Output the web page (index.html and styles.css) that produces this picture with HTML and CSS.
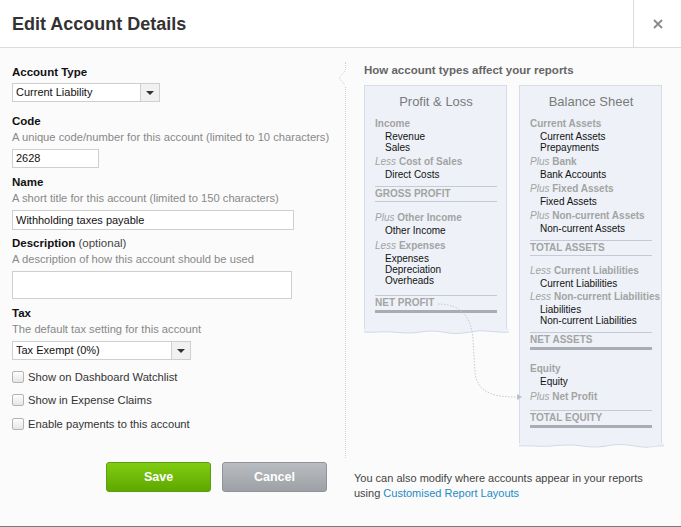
FILE: index.html
```html
<!DOCTYPE html>
<html>
<head>
<meta charset="utf-8">
<link rel="stylesheet" href="styles.css">
</head>
<body>
<div class="dialog">
  <header class="hdr">
    <h1 class="title">Edit Account Details</h1>
    <div class="close">
      <svg width="10" height="10" viewBox="0 0 10 10"><path d="M1 1L9 9M9 1L1 9" stroke="#8a8a8a" stroke-width="1.8"/></svg>
    </div>
  </header>

  <div class="main">
    <div class="form">
      <div class="lbl">Account Type</div>
      <div class="select sel-type mt3"><span class="val">Current Liability</span><span class="arr"></span></div>

      <div class="lbl mt11">Code</div>
      <div class="help">A unique code/number for this account (limited to 10 characters)</div>
      <div class="input in-code mt4">2628</div>

      <div class="lbl mt6">Name</div>
      <div class="help">A short title for this account (limited to 150 characters)</div>
      <div class="input in-name mt4">Withholding taxes payable</div>

      <div class="lbl mt5">Description <span class="opt">(optional)</span></div>
      <div class="help">A description of how this account should be used</div>
      <div class="input in-desc mt4"></div>

      <div class="lbl mt6">Tax</div>
      <div class="help">The default tax setting for this account</div>
      <div class="select sel-tax mt4"><span class="val">Tax Exempt (0%)</span><span class="arr"></span></div>

      <label class="chk mt9"><span class="box"></span>Show on Dashboard Watchlist</label>
      <label class="chk mt7"><span class="box"></span>Show in Expense Claims</label>
      <label class="chk mt8"><span class="box"></span>Enable payments to this account</label>
    </div>

    <div class="info">
      <div class="notch"><svg width="8" height="16" viewBox="0 0 8 16"><path d="M7 0L1 7L7 14" fill="none" stroke="#c9d1dd" stroke-width="1" stroke-dasharray="1 1"/></svg></div>
      <div class="info-h">How account types affect your reports</div>
      <div class="cards">
        <div class="card pl">
          <div class="card-t">Profit &amp; Loss</div>
          <div class="cat mt7">Income</div>
          <div class="it">Revenue</div>
          <div class="it">Sales</div>
          <div class="cat mt2"><i>Less</i> Cost of Sales</div>
          <div class="it">Direct Costs</div>
          <div class="tot mt6">GROSS PROFIT</div>
          <div class="cat mt9"><i>Plus</i> Other Income</div>
          <div class="it">Other Income</div>
          <div class="cat mt3"><i>Less</i> Expenses</div>
          <div class="it">Expenses</div>
          <div class="it">Depreciation</div>
          <div class="it">Overheads</div>
          <div class="tot thick mt9">NET PROFIT</div>
          <svg class="tear" viewBox="0 0 143 6" preserveAspectRatio="none"><path d="M0 0V3C10 4 18 2 28 3S45 5 56 3 74 2 84 4 102 3 112 2 130 4 143 3V0Z" fill="#eef2f8"/><path d="M0 3C10 4 18 2 28 3S45 5 56 3 74 2 84 4 102 3 112 2 130 4 143 3" fill="none" stroke="#d3dae5" stroke-width="1"/></svg>
        </div>
        <div class="card bs">
          <div class="card-t">Balance Sheet</div>
          <div class="cat mt7">Current Assets</div>
          <div class="it">Current Assets</div>
          <div class="it">Prepayments</div>
          <div class="cat mt2"><i>Plus</i> Bank</div>
          <div class="it">Bank Accounts</div>
          <div class="cat mt2"><i>Plus</i> Fixed Assets</div>
          <div class="it">Fixed Assets</div>
          <div class="cat mt2"><i>Plus</i> Non-current Assets</div>
          <div class="it">Non-current Assets</div>
          <div class="tot mt6">TOTAL ASSETS</div>
          <div class="cat mt8"><i>Less</i> Current Liabilities</div>
          <div class="it">Current Liabilities</div>
          <div class="cat mt1"><i>Less</i> Non-current Liabilities</div>
          <div class="it">Liabilities</div>
          <div class="it">Non-current Liabilities</div>
          <div class="tot thick mt6">NET ASSETS</div>
          <div class="cat mt12">Equity</div>
          <div class="it">Equity</div>
          <div class="cat mt3"><i>Plus</i> Net Profit</div>
          <div class="tot thick mt6">TOTAL EQUITY</div>
          <svg class="tear" viewBox="0 0 143 6" preserveAspectRatio="none"><path d="M0 0V3C12 2 20 4 32 3S50 1 62 3 80 4 92 2 110 3 122 4 136 2 143 3V0Z" fill="#eef2f8"/><path d="M0 3C12 2 20 4 32 3S50 1 62 3 80 4 92 2 110 3 122 4 136 2 143 3" fill="none" stroke="#d3dae5" stroke-width="1"/></svg>
        </div>
      </div>
    </div>
  </div>

  <div class="foot">
    <div class="btns">
      <button class="btn save">Save</button>
      <button class="btn cancel">Cancel</button>
    </div>
    <div class="note">You can also modify where accounts appear in your reports<br>using <a class="link">Customised Report Layouts</a></div>
  </div>

  <svg class="flow" width="681" height="527" viewBox="0 0 681 527">
    <path d="M438 304C462 304 472 318 473 340L475 372C477 392 492 397 516 397" fill="none" stroke="#c3cad6" stroke-width="1" stroke-dasharray="1.5 1.5"/>
    <path d="M517 394L522 397L517 400Z" fill="#b8bfcb"/>
  </svg>
</div>
</body>
</html>
```

FILE: styles.css
```css
* { box-sizing: border-box; }
html, body { margin: 0; padding: 0; }
body {
  width: 681px;
  height: 527px;
  background: #fbfbfb;
  font-family: "Liberation Sans", Arial, sans-serif;
  color: #222;
  overflow: hidden;
}
.dialog {
  position: relative;
  width: 681px;
  height: 527px;
  background: #fbfbfb;
  border-bottom: 1px solid #7a7a7a;
}

/* header */
.hdr {
  display: flex;
  align-items: stretch;
  height: 48px;
  background: #fff;
  border-bottom: 1px solid #dcdcdc;
}
.title {
  flex: 1;
  margin: 0;
  padding: 13px 0 0 12px;
  font-size: 18px;
  line-height: 22px;
  font-weight: bold;
  color: #333;
}
.close {
  width: 48px;
  border-left: 1px solid #dcdcdc;
  display: flex;
  align-items: center;
  justify-content: center;
}

/* main */
.main {
  display: flex;
  height: 410px;
}
.form {
  width: 345px;
  padding: 16px 0 0 12px;
}
.lbl {
  font-size: 11.5px;
  line-height: 16px;
  font-weight: bold;
  color: #111;
}
.opt { font-weight: normal; color: #444; }
.help {
  font-size: 11.2px;
  line-height: 16px;
  color: #888;
}
.input {
  height: 19px;
  background: #fff;
  border: 1px solid #cfcfcf;
  font-size: 11px;
  line-height: 17px;
  padding-left: 3px;
  color: #111;
}
.in-code { width: 87px; }
.in-name { width: 282px; height: 20px; line-height: 18px; }
.in-desc { width: 280px; height: 28px; }
.select {
  display: flex;
  height: 19px;
  background: #fff;
  border: 1px solid #cfcfcf;
  font-size: 11px;
  line-height: 17px;
  color: #111;
}
.select .val { flex: 1; padding-left: 3px; }
.select .arr {
  width: 19px;
  border-left: 1px solid #cfcfcf;
  background: #f1f1f1;
  position: relative;
}
.select .arr::after {
  content: "";
  position: absolute;
  left: 5px;
  top: 7px;
  border-left: 4px solid transparent;
  border-right: 4px solid transparent;
  border-top: 4px solid #333;
}
.sel-type { width: 148px; }
.sel-tax { width: 179px; }
.chk {
  display: flex;
  align-items: center;
  height: 16px;
  font-size: 11.2px;
  color: #333;
}
.box {
  width: 12px;
  height: 12px;
  margin-right: 4px;
  border: 1px solid #b4b4b4;
  border-radius: 2px;
  background: linear-gradient(#fdfdfd, #e6e6e6);
}

/* info panel */
.info {
  position: relative;
  flex: 1;
  margin-top: 14px;
  border-left: 1px dotted #c9d1dd;
  padding-left: 18px;
}
.notch {
  position: absolute;
  left: -8px;
  top: 9px;
  width: 8px;
  height: 16px;
  background: #fbfbfb;
  display: flex;
}
.info-h {
  font-size: 11.5px;
  line-height: 16px;
  font-weight: bold;
  color: #666;
}
.cards {
  display: flex;
  align-items: flex-start;
  gap: 12px;
  margin-top: 7px;
}
.card {
  position: relative;
  width: 143px;
  background: #eef2f8;
  border: 1px solid #d6dde8;
  border-bottom: none;
  padding: 0 9px 17px 10px;
}
.card.bs { padding-bottom: 16px; }
.card-t {
  padding-top: 8px;
  text-align: center;
  font-size: 13px;
  line-height: 16px;
  color: #7a7a7a;
}
.cat {
  font-size: 10px;
  line-height: 14px;
  font-weight: bold;
  color: #a3a3a3;
  white-space: nowrap;
}
.cat i { font-weight: normal; }
.it {
  font-size: 10px;
  line-height: 11px;
  padding-left: 10px;
  color: #111;
  white-space: nowrap;
}
.tot {
  font-size: 10px;
  line-height: 14px;
  font-weight: bold;
  color: #a3a3a3;
  border-top: 1px solid #c6cad2;
  border-bottom: 1px solid #c6cad2;
}
.tot.thick { border-bottom: 3px solid #a9acb2; }
.tear {
  position: absolute;
  left: -1px;
  bottom: -5px;
  width: 145px;
  height: 6px;
}

.mt1 { margin-top: 1px; }
.mt2 { margin-top: 2px; }
.mt3 { margin-top: 3px; }
.mt4 { margin-top: 4px; }
.mt5 { margin-top: 5px; }
.mt6 { margin-top: 6px; }
.mt7 { margin-top: 7px; }
.mt8 { margin-top: 8px; }
.mt9 { margin-top: 9px; }
.mt11 { margin-top: 11px; }
.mt12 { margin-top: 12px; }

/* footer */
.foot {
  display: flex;
  padding-top: 4px;
}
.btns {
  width: 345px;
  display: flex;
  justify-content: flex-end;
  gap: 11px;
  padding-right: 18px;
}
.btn {
  width: 105px;
  height: 30px;
  border-radius: 3px;
  font-family: "Liberation Sans", Arial, sans-serif;
  font-size: 12.5px;
  font-weight: bold;
  color: #fff;
  padding: 0;
}
.save {
  background: linear-gradient(#80cc10, #5ea800);
  border: 1px solid #5a9e12;
}
.cancel {
  background: linear-gradient(#b9bcc0, #9da0a4);
  border: 1px solid #8f9296;
}
.note {
  padding: 9px 0 0 9px;
  font-size: 11px;
  line-height: 15px;
  color: #444;
}
.link { color: #1f8ac6; }

.flow {
  position: absolute;
  left: 0;
  top: 0;
  pointer-events: none;
}
```
